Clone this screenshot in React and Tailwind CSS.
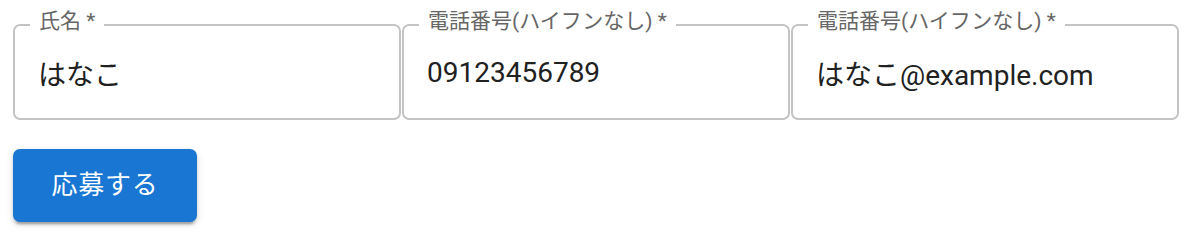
import { useState } from "react";

function Field({ label, value, onChange }) {
  return (
    <fieldset className="flex-1 min-w-0 border-2 border-[#c4c4c4] rounded-[7px]">
      <legend className="ml-[15px] px-[9px] pb-[6px] text-[21px] leading-[21px] text-[#666]">
        {label} *
      </legend>
      <input
        type="text"
        value={value}
        onChange={onChange}
        className="block w-full h-[80px] pb-[11px] pl-[23px] pr-[20px] text-[28px] leading-[33px] text-[#212121] bg-transparent outline-none"
      />
    </fieldset>
  );
}

export default function App() {
  const [form, setForm] = useState({
    name: "はなこ",
    tel: "09123456789",
    email: "はなこ@example.com",
  });

  const handleChange = (key) => (e) => {
    const value = e.target.value;
    setForm((prev) => ({ ...prev, [key]: value }));
  };

  return (
    <div className="min-h-screen bg-white pt-[11px] pl-[13px] pr-[21px] font-[Roboto,'Noto_Sans_CJK_JP',sans-serif]">
      <div className="flex gap-[1px]">
        <Field label="氏名" value={form.name} onChange={handleChange("name")} />
        <Field label="電話番号(ハイフンなし)" value={form.tel} onChange={handleChange("tel")} />
        <Field label="電話番号(ハイフンなし)" value={form.email} onChange={handleChange("email")} />
      </div>

      <button
        type="button"
        className="mt-[29px] w-[184px] h-[73px] rounded-[7px] bg-[#1976d2] text-white text-[26px] font-normal tracking-[0.03em] shadow-[0_5px_2px_-3px_rgba(0,0,0,0.2),0_3px_3px_0_rgba(0,0,0,0.14),0_2px_9px_0_rgba(0,0,0,0.12)]"
      >
        応募する
      </button>
    </div>
  );
}
